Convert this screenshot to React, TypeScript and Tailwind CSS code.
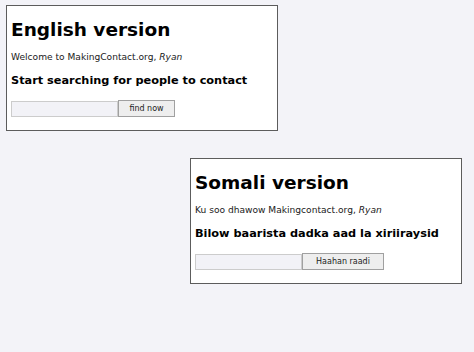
import React from "react";

function Card({ title, welcome, name, sub, btn, btnW }: { title: string; welcome: string; name: string; sub: string; btn: string; btnW: string }) {
  return (
    <div className="w-[272px] h-[126px] border border-[#5c5c5c] bg-white px-[4px] pt-[13px]">
      <h1 className="text-[18.5px] leading-[22px] font-bold text-black">{title}</h1>
      <p className="mt-[10px] text-[9.1px] leading-[12px] text-[#1a1a1a]">
        {welcome} <i>{name}</i>
      </p>
      <h2 className="mt-[11px] text-[11.3px] leading-[14px] font-bold text-black whitespace-nowrap">{sub}</h2>
      <div className="mt-[12px] flex items-center">
        <input className="w-[107px] h-[16px] bg-[#f2f2f7] border border-[#cccccc]" />
        <button className={`${btnW} h-[17px] bg-[#eeeeee] border border-[#a0a0a0] text-[8px] leading-[12px] text-[#222]`}>{btn}</button>
      </div>
    </div>
  );
}

export default function App() {
  return (
    <div className="w-[474px] h-[352px] bg-[#f3f3f8] pt-[5px] pl-[6px]" style={{ fontFamily: '"DejaVu Sans", sans-serif' }}>
      <Card title="English version" welcome="Welcome to MakingContact.org," name="Ryan" sub="Start searching for people to contact" btn="find now" btnW="w-[57px]" />
      <div className="mt-[27px] ml-[184px]">
        <Card title="Somali version" welcome="Ku soo dhawow Makingcontact.org," name="Ryan" sub="Bilow baarista dadka aad la xiriiraysid" btn="Haahan raadi" btnW="w-[82px]" />
      </div>
    </div>
  );
}
